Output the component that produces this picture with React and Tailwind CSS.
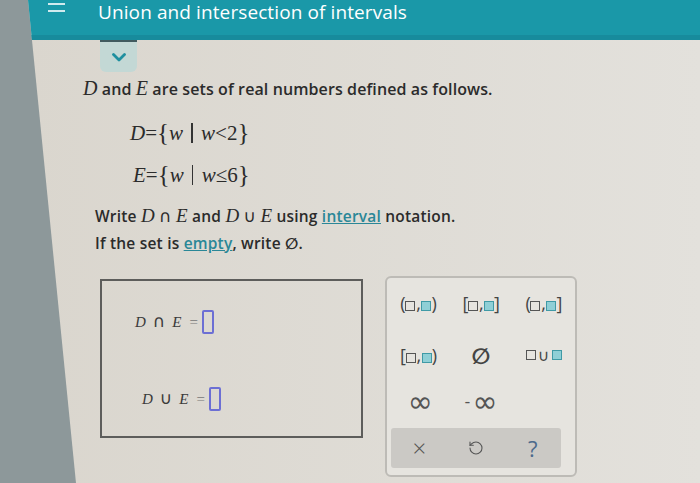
import { RotateCcw } from 'lucide-react';

const serif = { fontFamily: '"Liberation Serif", "DejaVu Serif", serif' };
const dv = { fontFamily: '"DejaVu Sans", sans-serif' };

function Sq({ filled }) {
  return filled ? (
    <span className="inline-block w-[10px] h-[10px] bg-[#8fcfd6] border border-[#3f9aa6] align-[-1px]" />
  ) : (
    <span className="inline-block w-[10px] h-[10px] border-[1.5px] border-[#555] align-[-1px]" />
  );
}

function Pair({ l, r }) {
  return (
    <span className="text-[18px] text-[#444] leading-none tracking-tight">
      {l}
      <Sq />
      <span className="mx-[1px]">,</span>
      <Sq filled />
      {r}
    </span>
  );
}

function Blank() {
  return <span className="inline-block w-[12px] h-[24px] border-2 border-[#6c6fd4] rounded-[2px] ml-[4px] align-middle" />;
}

function Brace({ c }) {
  return <span className="text-[25px] leading-none align-[-1px]">{c}</span>;
}

export default function App() {
  return (
    <div className="w-[700px] h-[483px] overflow-hidden bg-[#8d989a] flex" style={{ fontFamily: '"Open Sans", "DejaVu Sans", sans-serif' }}>
      <div className="ml-[28px] flex-1 flex flex-col bg-linear-to-r from-[#dad6ce] to-[#e3e1dc] [clip-path:polygon(0_0,100%_0,100%_100%,48px_100%)]">
        {/* header */}
        <div className="h-[40px] bg-[#1a98a8] border-b-[5px] border-[#178b9c] flex items-start shrink-0">
          <div className="ml-[20px] mt-[-4px] flex flex-col gap-[5px]">
            <div className="w-[17px] h-[2px] bg-white/80" />
            <div className="w-[17px] h-[2px] bg-white/80" />
            <div className="w-[17px] h-[2px] bg-white/80" />
          </div>
          <div className="ml-[33px] mt-[2px] text-[19px] leading-[20px] text-white tracking-[0.1px]">Union and intersection of intervals</div>
        </div>

        {/* tab */}
        <div className="ml-[72px] w-[37px] h-[32px] bg-[#c3d8d5] rounded-b-md border-t-2 border-[#415a5e] flex items-center justify-center shrink-0">
          <svg width="14" height="9" viewBox="0 0 14 9">
            <path d="M1.5 1.5 L7 7 L12.5 1.5" fill="none" stroke="#1e8f9f" strokeWidth="2.8" strokeLinecap="round" strokeLinejoin="round" />
          </svg>
        </div>

        {/* question */}
        <div className="ml-[55px] mt-[6px] h-[20px] leading-[20px] text-[16px] font-semibold text-[#2b2b2b] tracking-[0.1px]">
          <span className="italic font-normal text-[20px]" style={serif}>D</span> and{' '}
          <span className="italic font-normal text-[20px]" style={serif}>E</span> are sets of real numbers defined as follows.
        </div>

        <div className="ml-[102px] mt-[21px] h-[28px] leading-[28px] text-[21px] text-[#2b2b2b]" style={serif}>
          <i>D</i>=<Brace c="{" /><i>w</i> <span className="inline-block w-[1.5px] h-[20px] bg-[#333] align-[-3px] mx-[3px]" /> <i>w</i>&lt;2<Brace c="}" />
        </div>
        <div className="ml-[105px] mt-[14px] h-[28px] leading-[28px] text-[21px] text-[#2b2b2b]" style={serif}>
          <i>E</i>=<Brace c="{" /><i>w</i> <span className="inline-block w-[1.5px] h-[20px] bg-[#333] align-[-3px] mx-[3px]" /> <i>w</i>≤6<Brace c="}" />
        </div>

        <div className="ml-[67px] mt-[16px] h-[22px] leading-[22px] text-[15.5px] font-semibold text-[#2b2b2b] tracking-[0.2px]">
          Write <span className="italic font-normal text-[19px]" style={serif}>D</span>{' '}
          <span className="font-normal text-[17px]" style={dv}>∩</span>{' '}
          <span className="italic font-normal text-[19px]" style={serif}>E</span> and{' '}
          <span className="italic font-normal text-[19px]" style={serif}>D</span>{' '}
          <span className="font-normal text-[17px]" style={dv}>∪</span>{' '}
          <span className="italic font-normal text-[19px]" style={serif}>E</span> using{' '}
          <span className="text-[#2a8797] underline">interval</span> notation.
        </div>
        <div className="ml-[67px] mt-[5px] h-[22px] leading-[22px] text-[15.5px] font-semibold text-[#2b2b2b] tracking-[0.2px]">
          If the set is <span className="text-[#2a8797] underline">empty</span>, write ∅.
        </div>

        {/* answer area */}
        <div className="mt-[22px] flex items-start">
          <div className="ml-[72px] mt-[3px] w-[263px] h-[159px] border-2 border-[#5d5d5b] relative shrink-0 text-[15px] text-[#3a3a3a]" style={serif}>
            <div className="absolute left-[33px] top-[28px] flex items-center">
              <i>D</i><span className="mx-[7px] text-[17px]" style={dv}>∩</span><i>E</i><span className="ml-[8px] text-[#777]">=</span><Blank />
            </div>
            <div className="absolute left-[40px] top-[105px] flex items-center">
              <i>D</i><span className="mx-[7px] text-[17px]" style={dv}>∪</span><i>E</i><span className="ml-[8px] text-[#777]">=</span><Blank />
            </div>
          </div>

          <div className="ml-[22px] w-[192px] h-[201px] border-2 border-[#bdbbb6] rounded-[6px] bg-[#e6e4df] flex flex-col shrink-0">
            <div className="grid grid-cols-3 mt-[15px] h-[20px] items-center justify-items-center">
              <Pair l="(" r=")" />
              <Pair l="[" r="]" />
              <Pair l="(" r="]" />
            </div>
            <div className="grid grid-cols-3 mt-[31px] h-[20px] items-center justify-items-center">
              <Pair l="[" r=")" />
              <span className="text-[22px] font-bold text-[#444] leading-none">∅</span>
              <span className="flex items-center gap-[2px] text-[16px] text-[#444] leading-none">
                <Sq />∪<Sq filled />
              </span>
            </div>
            <div className="grid grid-cols-3 mt-[28px] h-[20px] items-center justify-items-center">
              <span className="text-[30px] h-[20px] leading-[20px] text-[#555] ml-[4px]" style={dv}>∞</span>
              <span className="flex items-center h-[20px] text-[#555]" style={dv}>
                <span className="text-[16px] leading-none mr-[2px]">-</span>
                <span className="text-[30px] leading-[20px]">∞</span>
              </span>
              <span />
            </div>
            <div className="ml-[4px] mt-[16px] w-[170px] h-[40px] bg-[#cbc9c5] rounded-[3px] grid grid-cols-3 items-center justify-items-center">
              <span className="text-[24px] text-[#555] leading-none font-light">×</span>
              <RotateCcw size={16} strokeWidth={1.6} color="#555" />
              <span className="text-[22px] text-[#4d6a8c] leading-none">?</span>
            </div>
          </div>
        </div>
      </div>
    </div>
  );
}
